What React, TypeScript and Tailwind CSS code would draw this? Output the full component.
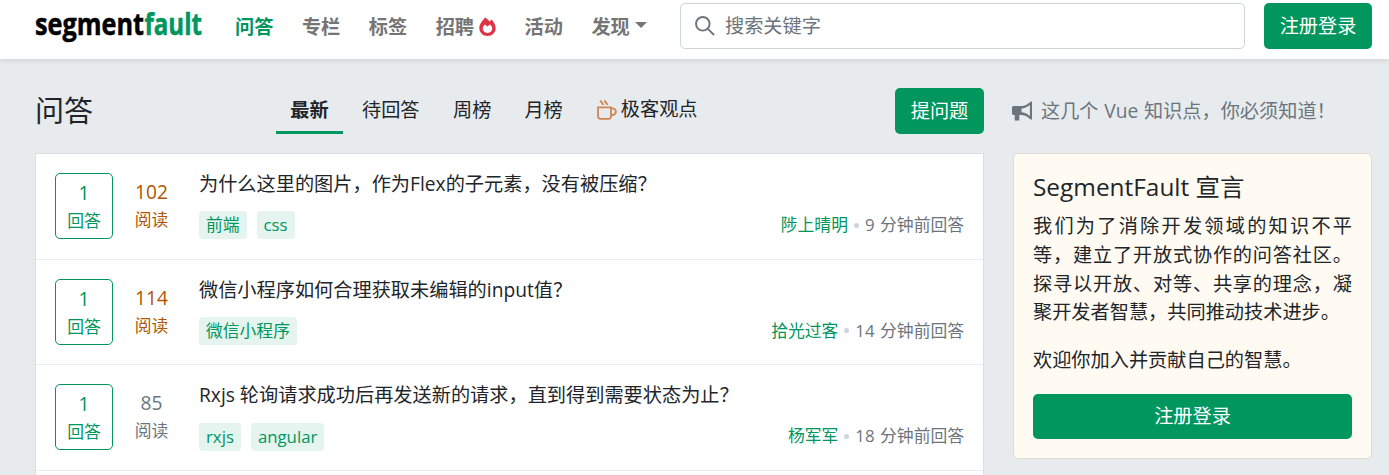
import { clsx } from 'clsx';

interface Question {
  answers: number;
  views: number;
  hot: boolean;
  title: string;
  tags: string[];
  author: string;
  time: string;
}

const QUESTIONS: Question[] = [
  {
    answers: 1,
    views: 102,
    hot: true,
    title: '为什么这里的图片，作为Flex的子元素，没有被压缩？',
    tags: ['前端', 'css'],
    author: '陟上晴明',
    time: '9 分钟前回答',
  },
  {
    answers: 1,
    views: 114,
    hot: true,
    title: '微信小程序如何合理获取未编辑的input值？',
    tags: ['微信小程序'],
    author: '拾光过客',
    time: '14 分钟前回答',
  },
  {
    answers: 1,
    views: 85,
    hot: false,
    title: 'Rxjs 轮询请求成功后再发送新的请求，直到得到需要状态为止？',
    tags: ['rxjs', 'angular'],
    author: '杨军军',
    time: '18 分钟前回答',
  },
];

function Logo() {
  return (
    <div className="flex h-[50px] w-[170px] shrink-0 font-bold">
      <svg width="109" height="50" className="overflow-visible">
        <text x="0" y="35" fontSize="29.5" textLength="109" lengthAdjust="spacingAndGlyphs" fill="#000" stroke="#000" strokeWidth="0.5">
          segment
        </text>
      </svg>
      <svg width="59" height="50" className="overflow-visible">
        <text x="0.5" y="35" fontSize="29.5" textLength="57.5" lengthAdjust="spacingAndGlyphs" fill="#00965e" stroke="#00965e" strokeWidth="0.5">
          fault
        </text>
      </svg>
    </div>
  );
}

function FlameIcon() {
  return (
    <svg width="17" height="20" viewBox="0 0 17 20" className="ml-[5px]">
      <path
        fill="#dc3545"
        fillRule="evenodd"
        d="M6.3 0.500C3.6 3.300 0.3 7.2 0.3 11C0.3 15.700 4 19 8.500 19C13 19 16.700 15.700 16.700 11C16.700 8 14.700 4.500 12.600 2.500C11.900 3.200 11.200 4 10.700 4.700C9.600 3.200 8 1.700 6.300 0.500ZM5.900 7.500L8.300 9.600L11 7.400C12.600 8.500 13.200 10 13.200 11.500C13.200 14 11.100 15.900 8.500 15.900C5.900 15.900 3.800 14 3.800 11.500C3.800 10 4.700 8.700 5.900 7.500Z"
      />
    </svg>
  );
}

function CoffeeIcon() {
  return (
    <svg width="20" height="20" viewBox="0 0 20 20" fill="none" stroke="#cf8650" strokeWidth="1.800" className="ml-px mr-1">
      <path d="M1 7.300H14V16.300A2.500 2.500 0 0 1 11.500 18.800H3.500A2.500 2.500 0 0 1 1 16.300ZM14 8.300H15.500A3.300 3.300 0 0 1 15.500 15H14" />
      <path d="M3.500 0.300C3.500 2.500 6 2.500 6 5M7.700 0.300C7.700 2.500 10.200 2.500 10.200 5" />
    </svg>
  );
}

function BullhornIcon() {
  return (
    <svg width="20" height="20" viewBox="0 0 20 20" fill="#6c757d" className="-ml-px mr-[9px]">
      <path
        fillRule="evenodd"
        d="M19 0.500H20V18.500H18.500L15.500 16C13.700 14.600 11.500 13.900 9.300 13.900H7.300V19.500H2.700V13.900H1.500A1.500 1.500 0 0 1 0 12.400V6.600A1.500 1.500 0 0 1 1.500 5.100H9.300C11.500 5.100 13.700 4.400 15.500 3ZM17.900 3.900L16.400 5.100C14.400 6.600 12 7.500 9.500 7.700V11.300C12 11.500 14.400 12.400 16.400 13.900L17.900 15.100Z"
      />
    </svg>
  );
}

function Header() {
  return (
    <header className="relative flex h-[59px] items-start bg-white pl-[35px] pr-[17px] shadow-[0_2px_5px_rgba(0,0,0,0.09)]">
      <Logo />
      <nav className="ml-[30px] mt-[13px] flex h-[29px] w-[445px] items-center gap-[28.5px] font-bold text-[#757575]">
        <a className="text-[#00965e]">问答</a>
        <a>专栏</a>
        <a>标签</a>
        <a className="flex items-center">
          招聘
          <FlameIcon />
        </a>
        <a>活动</a>
        <a className="flex items-center">
          发现
          <span className="-mt-1 ml-[5px] border-x-[6px] border-t-[6px] border-x-transparent border-t-[#757575]" />
        </a>
      </nav>
      <div className="mt-[3px] flex h-[46px] w-[565px] items-center rounded-[5px] border border-[#ced4da] pl-[14px] text-[#6c757d]">
        <svg width="20" height="20" viewBox="0 0 20 20" fill="none" stroke="#6c757d" strokeWidth="1.900">
          <circle cx="7.800" cy="7.800" r="6.800" />
          <path d="M12.700 12.700L19 19" />
        </svg>
        <span className="ml-[10px]">搜索关键字</span>
      </div>
      <button className="ml-auto mt-[3px] h-[46px] w-[108px] rounded-[5px] bg-[#00965e] text-white">注册登录</button>
    </header>
  );
}

function QuestionRow({ question }: { question: Question }) {
  return (
    <li className="flex h-[105.6px] border-b border-[#ececec] px-[19px] pt-[19px]">
      <div className="flex h-[66px] w-[58px] flex-col items-center rounded-[5px] border border-[#00965e] pt-1 text-[#00965e]">
        <span className="h-[30px] leading-[29px]">{question.answers}</span>
        <span className="text-[16.8px] leading-[25px]">回答</span>
      </div>
      <div
        className={clsx(
          'flex h-[66px] w-[77px] flex-col items-center pt-1',
          question.hot ? 'text-[#b15500]' : 'text-[#6c757d]'
        )}
      >
        <span className="h-[30px] leading-[29px]">{question.views}</span>
        <span className="text-[16.8px] leading-[25px]">阅读</span>
      </div>
      <div className="ml-[9px] flex-1">
        <h3 className="-mt-1 h-[30px] whitespace-nowrap leading-[29px]">{question.title}</h3>
        <div className="mt-3 flex items-center justify-between text-[16.8px]">
          <div className="flex gap-[10px]">
            {question.tags.map((tag) => (
              <span key={tag} className="h-7 rounded-[4px] bg-[#e5f4ee] px-[7px] leading-[27px] text-[#00965e]">
                {tag}
              </span>
            ))}
          </div>
          <div className="flex items-center text-[#6c757d]">
            <span className="text-[#00965e]">{question.author}</span>
            <span className="mx-[6px] size-[5px] rounded-full bg-[#ced4da]" />
            <span className="[word-spacing:1.2px]">{question.time}</span>
          </div>
        </div>
      </div>
    </li>
  );
}

function Main() {
  return (
    <main className="w-[949px]">
      <div className="flex h-[46px] items-center">
        <h1 className="w-[241px] text-[29px] leading-[48px]">问答</h1>
        <nav className="flex h-[46px] items-start">
          <a className="h-[46px] w-[67px] border-b-[3px] border-[#00965e] text-center font-bold leading-[43px]">最新</a>
          <a className="ml-[19px] leading-[43px]">待回答</a>
          <a className="ml-[33.500px] leading-[43px]">周榜</a>
          <a className="ml-[33px] leading-[43px]">月榜</a>
          <a className="ml-[33px] flex h-[43px] items-center">
            <CoffeeIcon />
            极客观点
          </a>
        </nav>
        <button className="ml-auto h-[46px] w-[89px] rounded-[5px] bg-[#00965e] pt-px text-white">提问题</button>
      </div>
      <ul className="mt-[19px] h-[340px] overflow-hidden border border-[#dcdfe1] bg-white">
        {QUESTIONS.map((question) => (
          <QuestionRow key={question.title} question={question} />
        ))}
      </ul>
    </main>
  );
}

function Sidebar() {
  return (
    <aside className="w-[359px]">
      <a className="flex h-[46px] items-center text-[#6c757d] [word-spacing:0.7px]">
        <BullhornIcon />
        这几个 Vue 知识点，你必须知道！
      </a>
      <section className="mt-[19px] h-[306px] rounded-[5px] border border-[#dedcd4] bg-[#fffbf2] px-[19px] pt-[18px]">
        <h2 className="text-[24.4px] leading-[29px]">SegmentFault 宣言</h2>
        <p className="mt-[11px] text-justify leading-[28.800px]">
          我们为了消除开发领域的知识不平等，建立了开放式协作的问答社区。探寻以开放、对等、共享的理念，凝聚开发者智慧，共同推动技术进步。
        </p>
        <p className="mt-[19px] leading-[28.800px]">欢迎你加入并贡献自己的智慧。</p>
        <button className="mt-[19px] h-[45px] w-full rounded-[5px] bg-[#00965e] text-white">注册登录</button>
      </section>
    </aside>
  );
}

export default function App() {
  return (
    <div
      lang="zh-CN"
      className="h-[475px] w-[1389px] overflow-hidden bg-[#e7ebee] font-['Open_Sans','Noto_Sans_CJK_SC',sans-serif] text-[19.2px] leading-[28.800px] text-[#212529]"
    >
      <Header />
      <div className="flex gap-[29px] pl-[35px] pt-[29px]">
        <Main />
        <Sidebar />
      </div>
    </div>
  );
}
